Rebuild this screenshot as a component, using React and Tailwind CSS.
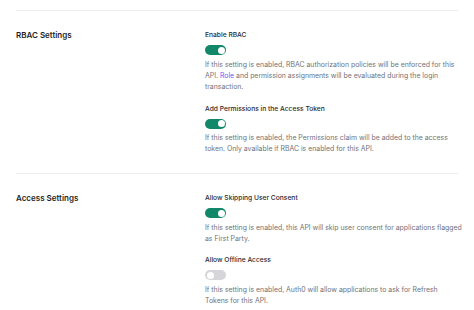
import React from "react";

function Toggle({ on }) {
  return (
    <div
      className={
        "mt-[5px] flex h-[10px] w-[21px] items-center rounded-full px-[1.5px] " +
        (on ? "justify-end bg-[#13876a]" : "justify-start bg-[#d6d6da]")
      }
    >
      <div className="h-[7px] w-[7px] rounded-full bg-white" />
    </div>
  );
}

function Item({ label, on, children, first }) {
  return (
    <div className={first ? "" : "mt-[11.5px]"}>
      <div className="text-[6.7px] font-medium leading-[10px] text-[#2a2a30]">{label}</div>
      <Toggle on={on} />
      <p className="mt-[3.5px] text-[6.9px] leading-[11.2px] text-[#727278]">{children}</p>
    </div>
  );
}

function Section({ title, children, last }) {
  return (
    <div className={"flex border-t border-[#ededf0] pt-[19px] " + (last ? "" : "pb-[18.5px]")}>
      <div className="w-[189px] shrink-0 text-[8px] font-semibold leading-[10px] text-[#1f1f25]">{title}</div>
      <div className="-mr-[10px] w-[265px]">{children}</div>
    </div>
  );
}

export default function App() {
  return (
    <div
      className="h-[310px] w-[474px] overflow-hidden bg-white px-[16px] pt-[10px]"
      style={{ fontFamily: "Inter, 'Noto Sans', sans-serif" }}
    >
      <Section title="RBAC Settings">
        <Item label="Enable RBAC" on first>
          If this setting is enabled, RBAC authorization policies will be enforced for this API.{" "}
          <span className="text-[#635dff]">Role</span> and permission assignments will be evaluated during the login
          transaction.
        </Item>
        <Item label="Add Permissions in the Access Token" on>
          If this setting is enabled, the Permissions claim will be added to the access token. Only available if RBAC
          is enabled for this API.
        </Item>
      </Section>
      <Section title="Access Settings" last>
        <Item label="Allow Skipping User Consent" on first>
          If this setting is enabled, this API will skip user consent for applications flagged as First Party.
        </Item>
        <Item label="Allow Offline Access" on={false}>
          If this setting is enabled, Auth0 will allow applications to ask for Refresh
          <br />
          Tokens for this API.
        </Item>
      </Section>
    </div>
  );
}
